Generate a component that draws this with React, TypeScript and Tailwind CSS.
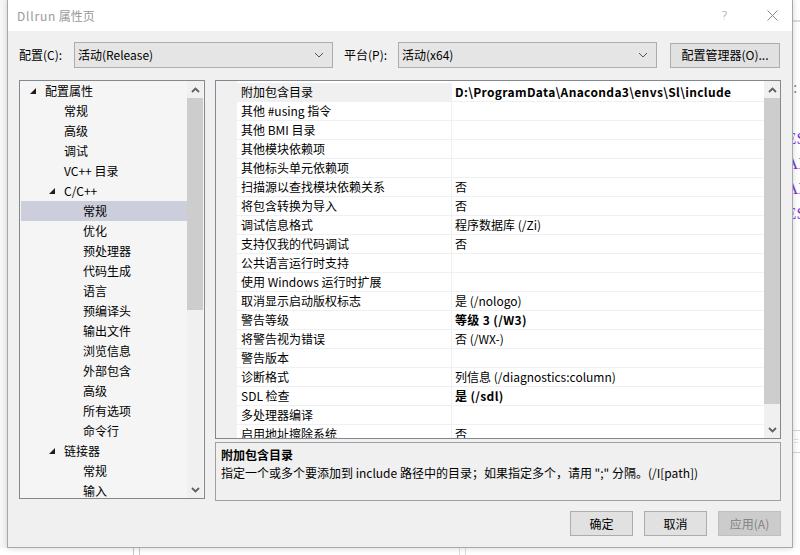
import type { ReactNode } from 'react'

type TreeItem = { label: string; level: 0 | 1 | 2; open?: boolean; selected?: boolean }

const tree: TreeItem[] = [
  { label: '配置属性', level: 0, open: true },
  { label: '常规', level: 1 },
  { label: '高级', level: 1 },
  { label: '调试', level: 1 },
  { label: 'VC++ 目录', level: 1 },
  { label: 'C/C++', level: 1, open: true },
  { label: '常规', level: 2, selected: true },
  { label: '优化', level: 2 },
  { label: '预处理器', level: 2 },
  { label: '代码生成', level: 2 },
  { label: '语言', level: 2 },
  { label: '预编译头', level: 2 },
  { label: '输出文件', level: 2 },
  { label: '浏览信息', level: 2 },
  { label: '外部包含', level: 2 },
  { label: '高级', level: 2 },
  { label: '所有选项', level: 2 },
  { label: '命令行', level: 2 },
  { label: '链接器', level: 1, open: true },
  { label: '常规', level: 2 },
  { label: '输入', level: 2 },
]

const indent = ['pl-[9px]', 'pl-[28px]', 'pl-[47px]']

const props: { name: string; value: string; bold?: boolean }[] = [
  { name: '附加包含目录', value: 'D:\\ProgramData\\Anaconda3\\envs\\Sl\\include', bold: true },
  { name: '其他 #using 指令', value: '' },
  { name: '其他 BMI 目录', value: '' },
  { name: '其他模块依赖项', value: '' },
  { name: '其他标头单元依赖项', value: '' },
  { name: '扫描源以查找模块依赖关系', value: '否' },
  { name: '将包含转换为导入', value: '否' },
  { name: '调试信息格式', value: '程序数据库 (/Zi)' },
  { name: '支持仅我的代码调试', value: '否' },
  { name: '公共语言运行时支持', value: '' },
  { name: '使用 Windows 运行时扩展', value: '' },
  { name: '取消显示启动版权标志', value: '是 (/nologo)' },
  { name: '警告等级', value: '等级 3 (/W3)', bold: true },
  { name: '将警告视为错误', value: '否 (/WX-)' },
  { name: '警告版本', value: '' },
  { name: '诊断格式', value: '列信息 (/diagnostics:column)' },
  { name: 'SDL 检查', value: '是 (/sdl)', bold: true },
  { name: '多处理器编译', value: '' },
  { name: '启用地址擦除系统', value: '否' },
]

function Chevron({ up = false, className = '' }: { up?: boolean; className?: string }) {
  return (
    <svg width="9" height="6" viewBox="0 0 9 6" className={className}>
      <path d={up ? 'M1 5 L4.5 1.5 L8 5' : 'M1 1 L4.5 4.5 L8 1'} fill="none" stroke="#606060" strokeWidth="1.8" />
    </svg>
  )
}

function Combo({ text }: { text: string }) {
  return (
    <div className="w-[259px] h-[26px] bg-[#e5e5e5] border border-[#adadad] flex items-center pl-[3px] pr-[8px]">
      <span className="flex-1 leading-[16px]">{text}</span>
      <svg width="10" height="6" viewBox="0 0 10 6">
        <path d="M1 1 L5 5 L9 1" fill="none" stroke="#555" strokeWidth="1" />
      </svg>
    </div>
  )
}

function Btn({ children, disabled = false, w = 'w-[63px]' }: { children: ReactNode; disabled?: boolean; w?: string }) {
  return (
    <div
      className={`${w} h-[25px] flex items-center justify-center border leading-[16px] ${
        disabled ? 'bg-[#cccccc] border-[#bfbfbf] text-[#838383]' : 'bg-[#e1e1e1] border-[#adadad] text-black'
      }`}
    >
      {children}
    </div>
  )
}

function Scrollbar({ thumbH }: { thumbH: string }) {
  return (
    <div className="w-[16px] h-full bg-[#f0f0f0] flex flex-col">
      <div className="h-[17px] flex items-center justify-center">
        <Chevron up />
      </div>
      <div className="flex-1 flex flex-col">
        <div className={`${thumbH} bg-[#cdcdcd]`} />
      </div>
      <div className="h-[17px] flex items-center justify-center">
        <Chevron />
      </div>
    </div>
  )
}

function Tree() {
  return (
    <div className="w-[186px] h-[419px] border border-[#828790] bg-[#f5f5f5] flex overflow-hidden">
      <div className="flex-1 overflow-hidden">
        {tree.map((t, i) => (
          <div
            key={i}
            className={`h-[20px] ml-[1px] flex items-center leading-[16px] ${indent[t.level]} ${t.selected ? 'bg-[#cccedb]' : ''}`}
          >
            <div className="w-[15px] flex items-center">
              {t.open && (
                <svg width="6" height="6" viewBox="0 0 6 6">
                  <polygon points="6,0 6,6 0,6" fill="#1e1e1e" />
                </svg>
              )}
            </div>
            <span className="whitespace-nowrap">{t.label}</span>
          </div>
        ))}
      </div>
      <div className="h-full mr-[1px]">
        <Scrollbar thumbH="h-[212px]" />
      </div>
    </div>
  )
}

function Grid() {
  return (
    <div className="w-[566px] h-[359px] border border-[#828790] bg-white flex overflow-hidden">
      <div className="flex-1 flex overflow-hidden">
        <div className="w-[21px] bg-[#f0f0f0] shrink-0" />
        <div className="flex-1 pt-[2px] overflow-hidden">
          {props.map((p, i) => (
            <div key={i} className="h-[19px] flex border-b border-[#eef0f4] leading-[16px]">
              <div
                className={`w-[215px] shrink-0 pl-[4px] flex items-center border-r border-[#eef0f4] whitespace-nowrap ${
                  i === 0 ? 'bg-[#f0f0f0]' : ''
                }`}
              >
                {p.name}
              </div>
              <div
                className={`flex-1 pl-[3px] flex items-center whitespace-nowrap ${
                  p.bold ? 'font-bold tracking-[0.35px]' : ''
                }`}
              >
                {p.value}
              </div>
            </div>
          ))}
        </div>
      </div>
      <Scrollbar thumbH="h-[306px]" />
    </div>
  )
}

function Backdrop() {
  return (
    <>
      <div className="absolute left-[792px] top-0 w-[8px] h-[20px] bg-white" />
      <div className="absolute left-[792px] top-[20px] w-[8px] h-[2px] bg-[#dcdcdc]" />
      <div className="absolute left-[786px] top-[78px] font-['Liberation_Serif',serif] text-[16px] leading-[20px] text-[#8a8a8a]">
        a:
      </div>
      <div className="absolute left-[786px] top-[126px] flex flex-col font-['Liberation_Serif',serif] text-[17px] leading-[25px] text-[#7b35d6]">
        <span>ES</span>
        <span>AI</span>
        <span>AI</span>
        <span>ES</span>
      </div>
      <div className="absolute left-[792px] top-[430px] w-[8px] h-[1px] bg-[#d4d4d4]" />
      <div className="absolute left-[794px] top-[436px] text-[8px] leading-[8px] text-[#bbbbbb]">::</div>
      <div className="absolute left-[792px] top-[452px] w-[8px] h-[1px] bg-[#d4d4d4]" />
      <div className="absolute left-[133px] top-[548px] w-[1px] h-[7px] bg-[#c8c8c8]" />
      <div className="absolute left-[139px] top-[548px] w-[1px] h-[7px] bg-[#c8c8c8]" />
      <div className="absolute left-[459px] top-[548px] w-[1px] h-[7px] bg-[#dddddd]" />
      <div className="absolute left-[465px] top-[548px] w-[1px] h-[7px] bg-[#dddddd]" />
    </>
  )
}

export default function App() {
  return (
    <div className="relative w-[800px] h-[555px] overflow-hidden bg-[#f7f7f7] text-[12px] text-black font-['Noto_Sans_CJK_SC',sans-serif]">
      <div className="absolute right-0 top-0 w-[8px] h-[555px] bg-white" />
      <div className="absolute left-0 bottom-0 w-[800px] h-[7px] bg-white" />
      <Backdrop />

      <div className="absolute left-[7px] top-0 w-[786px] h-[548px] border border-t-0 border-[#a8a8a8] bg-[#f0f0f0] shadow-[0_0_6px_rgba(0,0,0,0.18)] flex flex-col">
        {/* title bar */}
        <div className="h-[31px] bg-white flex items-center pl-[9px] pr-[14px] shrink-0">
          <span className="flex-1 text-[#999999] leading-[16px]">
            <span className="tracking-[0.8px]">Dllrun</span> 属性页
          </span>
          <span className="text-[#9a9a9a] text-[13px] font-['DejaVu_Sans',sans-serif] font-light mr-[39px]">?</span>
          <svg width="11" height="11" viewBox="0 0 11 11">
            <path d="M0.5 0.5 L10.5 10.5 M10.5 0.5 L0.5 10.5" stroke="#8a8a8a" strokeWidth="1" />
          </svg>
        </div>

        <div className="flex-1 flex flex-col px-[11px]">
          {/* config row */}
          <div className="mt-[11px] flex items-center h-[26px]">
            <span className="w-[55px] leading-[16px]">配置(C):</span>
            <Combo text="活动(Release)" />
            <span className="ml-[11px] w-[54px] leading-[16px]">平台(P):</span>
            <Combo text="活动(x64)" />
            <div className="ml-[13px]">
              <Btn w="w-[110px]">配置管理器(O)...</Btn>
            </div>
          </div>

          {/* main */}
          <div className="mt-[12px] flex">
            <Tree />
            <div className="ml-[10px] flex flex-col">
              <Grid />
              <div className="mt-[3px] w-[566px] h-[59px] border border-[#a0a0a0] bg-[#f0f0f0] pl-[5px] pt-[3px] leading-[18px]">
                <div className="font-bold">附加包含目录</div>
                <div>指定一个或多个要添加到 include 路径中的目录；如果指定多个，请用 ";" 分隔。(/I[path])</div>
              </div>
            </div>
          </div>

          {/* buttons */}
          <div className="mt-[10px] flex justify-end gap-[11px]">
            <Btn>确定</Btn>
            <Btn>取消</Btn>
            <Btn disabled>应用(A)</Btn>
          </div>
        </div>
      </div>
    </div>
  )
}
